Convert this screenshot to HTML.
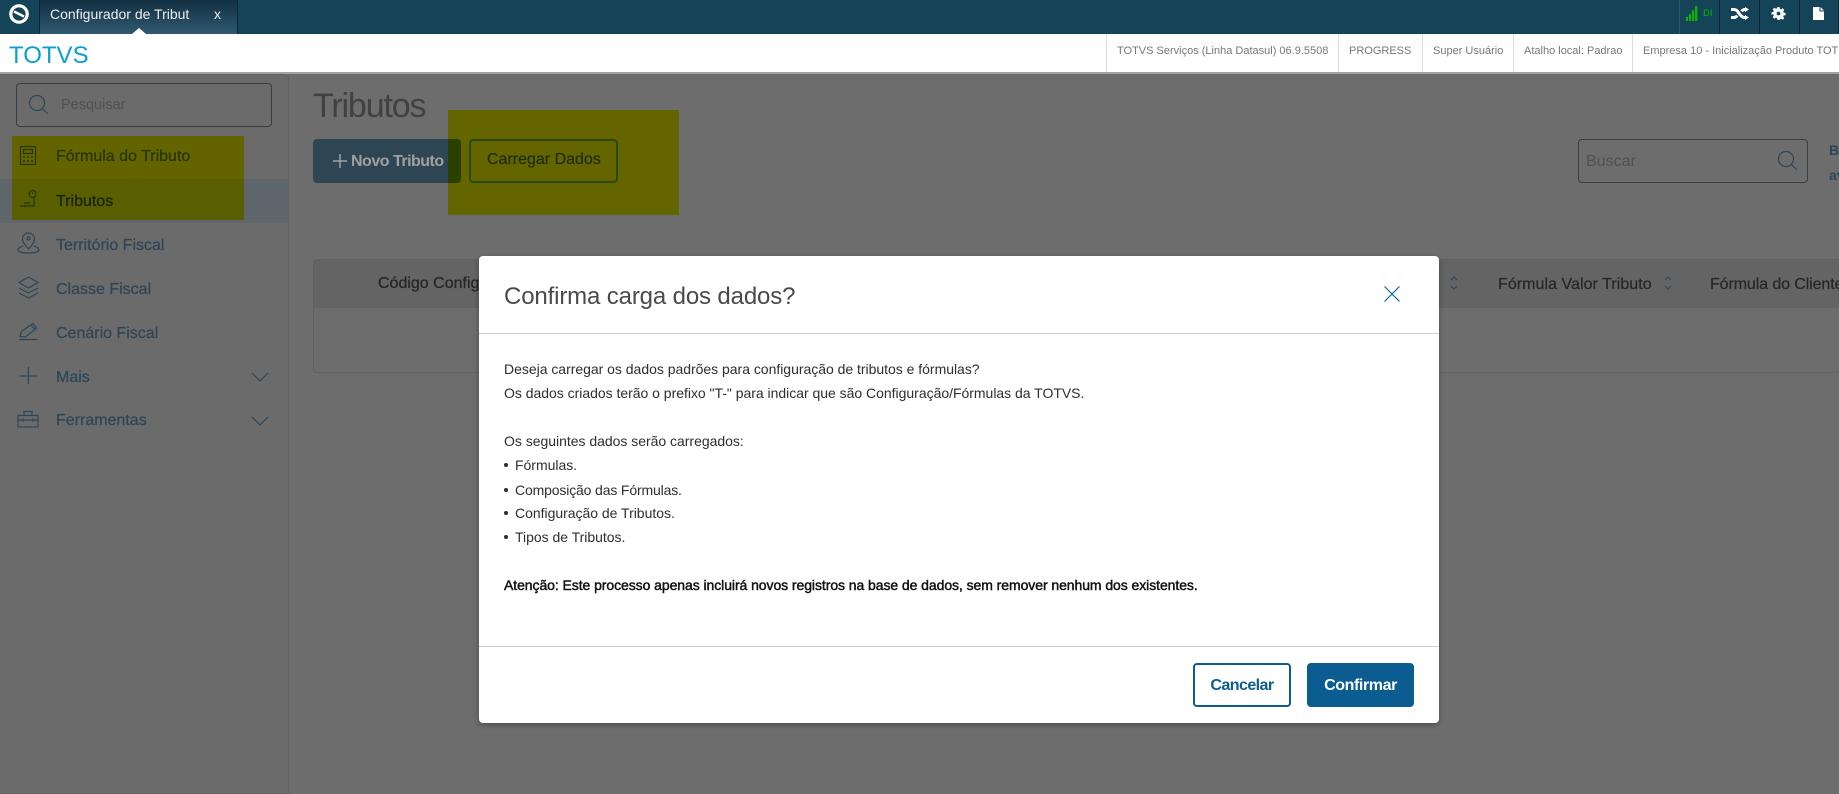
<!DOCTYPE html>
<html lang="pt-BR">
<head>
<meta charset="utf-8">
<title>Configurador de Tributos</title>
<style>
html,body{margin:0;padding:0;width:1839px;height:783px;overflow:hidden;background:#6d6d6d;font-family:"Liberation Sans",sans-serif}
.a{position:absolute}
.t{position:absolute;white-space:nowrap;line-height:1}
svg{position:absolute;overflow:visible}
.sep{position:absolute;width:1px}
.nav{font-size:16px;color:#2d4657;font-weight:400;-webkit-text-stroke:.25px #2d4657}
.mt{font-size:14px;color:#2e2e2e;letter-spacing:-.02px}
.b{display:inline-block;width:4px;height:4px;border-radius:50%;background:#2e2e2e;vertical-align:3px;margin-right:7px}
</style>
</head>
<body>
<!-- top bar -->
<div class="a" style="left:0;top:0;width:1839px;height:34px;background:#154357"></div>
<svg style="left:0;top:0" width="38" height="34" viewBox="0 0 38 34"><circle cx="19" cy="14" r="8.200" fill="none" stroke="#fff" stroke-width="3.200"/><path d="M14 11.500L24 16.500" fill="none" stroke="#fff" stroke-width="2.400"/></svg>
<div class="a" style="left:39px;top:0;width:199px;height:34px;background:linear-gradient(#112f42,#30596f);border-left:1px solid #0d2634;border-right:1px solid #0d2634;box-sizing:border-box"></div>
<div class="t" style="left:50px;top:7px;font-size:14px;color:#eee">Configurador de Tribut</div>
<div class="t" style="left:214px;top:7px;font-size:14px;color:#eee">x</div>
<div class="a" style="left:132px;top:28px;width:0;height:0;border-left:7px solid transparent;border-right:7px solid transparent;border-bottom:6px solid #fff"></div>
<div class="sep" style="left:1679px;top:0;height:34px;background:#2a5a70"></div>
<div class="sep" style="left:1719px;top:0;height:34px;background:#0d2634"></div>
<div class="sep" style="left:1759px;top:0;height:34px;background:#0d2634"></div>
<div class="sep" style="left:1799px;top:0;height:34px;background:#0d2634"></div>
<div class="sep" style="left:1838px;top:0;height:34px;background:#0d2634"></div>
<svg style="left:1686px;top:5px" width="12" height="16" viewBox="0 0 12 16"><path d="M0 12h2v4H0zM3 9h2v7H3zM6 5h2v11H6zM9 1h2.400v15H9z" fill="#0b0"/></svg>
<div class="t" style="left:1703px;top:9px;font-size:9.500px;color:#0b0">DI</div>
<svg style="left:1731px;top:7px" width="18" height="13" viewBox="0 0 18 13"><path d="M0 2.500h3c3 0 4 2.500 5.500 4.500s3 3.500 5 3.500H15M0 10.500h3c1.500 0 2.500-.8 3.300-1.800M10.500 4.300c.8-1 1.800-1.800 3.500-1.800h1" fill="none" stroke="#fff" stroke-width="3"/><path d="M14 0l4 2.500-4 2.500zM14 8l4 2.500-4 2.500z" fill="#fff"/></svg>
<svg style="left:1772px;top:7px" width="13" height="13" viewBox="0 0 24 24"><path fill="#fff" d="M10 0h4l.7 3.400 2.200.9 2.900-1.900 2.800 2.800-1.900 2.900.9 2.200 3.400.7v4l-3.400.7-.9 2.200 1.900 2.900-2.800 2.800-2.900-1.900-2.200.9L14 24h-4l-.7-3.400-2.200-.9-2.900 1.900-2.800-2.800 1.900-2.900-.9-2.200L-1 14v-4l3.400-.7.9-2.200-1.900-2.900 2.800-2.800 2.900 1.900 2.200-.9zM12 8.500a3.500 3.500 0 100 7 3.500 3.500 0 000-7z" fill-rule="evenodd"/></svg>
<svg style="left:1813px;top:7px" width="11" height="13" viewBox="0 0 11 13"><path d="M0 0h6.500v4.500H11V13H0zM7.500 0L11 3.500H7.500z" fill="#fff"/></svg>

<!-- second bar -->
<div class="a" style="left:0;top:34px;width:1839px;height:38px;background:#fff"></div>
<div class="a" style="left:0;top:72px;width:1839px;height:2px;background:#a3a3a3"></div>
<div class="t" style="left:9px;top:44px;font-size:24px;color:#0b9fd0">TOTVS</div>
<div class="sep" style="left:1106px;top:34px;height:38px;background:#ddd"></div>
<div class="sep" style="left:1338px;top:34px;height:38px;background:#ddd"></div>
<div class="sep" style="left:1422px;top:34px;height:38px;background:#ddd"></div>
<div class="sep" style="left:1513px;top:34px;height:38px;background:#ddd"></div>
<div class="sep" style="left:1632px;top:34px;height:38px;background:#ddd"></div>
<div class="t" style="left:1117px;top:46px;font-size:11px;color:#777">TOTVS Serviços (Linha Datasul) 06.9.5508</div>
<div class="t" style="left:1349px;top:46px;font-size:11px;color:#777">PROGRESS</div>
<div class="t" style="left:1433px;top:46px;font-size:11px;color:#777">Super Usuário</div>
<div class="t" style="left:1524px;top:46px;font-size:11px;color:#777">Atalho local: Padrao</div>
<div class="t" style="left:1643px;top:46px;font-size:11px;color:#777">Empresa 10 - Inicialização Produto TOT</div>

<!-- sidebar -->
<div class="a" style="left:-2px;top:74px;width:291px;height:720px;background:#6b6b6b;border:1px solid #626262;border-radius:5px 5px 0 0;box-sizing:border-box"></div>
<div class="a" style="left:0;top:179px;width:288px;height:44px;background:#60676c"></div>
<div class="a" style="left:16px;top:83px;width:256px;height:44px;border:1px solid #3d3d3d;border-radius:4px;box-sizing:border-box"></div>
<svg style="left:28px;top:94px" width="22" height="22" viewBox="0 0 22 22"><circle cx="9" cy="9" r="7.500" fill="none" stroke="#2d4657" stroke-width="1.200"/><path d="M14.500 14.500L20 20" stroke="#2d4657" stroke-width="1.200"/></svg>
<div class="t" style="left:61px;top:98px;font-size:14.500px;color:#505050">Pesquisar</div>

<div class="t nav" style="left:56px;top:149px;color:#2b3a08;-webkit-text-stroke:.25px #2b3a08">Fórmula do Tributo</div>
<div class="t nav" style="left:56px;top:194px;color:#1c2408;-webkit-text-stroke:.25px #1c2408">Tributos</div>
<div class="t nav" style="left:56px;top:238px">Território Fiscal</div>
<div class="t nav" style="left:56px;top:282px">Classe Fiscal</div>
<div class="t nav" style="left:56px;top:326px">Cenário Fiscal</div>
<div class="t nav" style="left:56px;top:370px">Mais</div>
<div class="t nav" style="left:56px;top:413px">Ferramentas</div>

<svg style="left:0;top:130px" width="50" height="300" viewBox="0 0 50 300" fill="none" stroke="#2d4657" stroke-width="1.200">
<!-- calculator -->
<g stroke="#2b3a08"><rect x="20.500" y="16.500" width="15" height="18"/><rect x="23.500" y="19.500" width="9" height="4"/>
<path d="M23 27h2M27 27h2M31 27h2M23 31h2M27 31h2M31 31h2" stroke-width="1.500"/>
<!-- tributos -->
<circle cx="32.500" cy="64" r="3.500"/><path d="M34 67.500V76H20M24 73h6M32.500 62v2"/></g>
<!-- territorio -->
<path d="M28.500 119c-3.500-4-6-7-6-10a6 6 0 0112 0c0 3-2.500 6-6 10z"/><circle cx="28.500" cy="108.500" r="1.500"/><path d="M23 116c-3 1-5 2.300-5 4 0 2 4.500 3 10.500 3s10.500-1 10.500-3c0-1.700-2-3-5-4"/>
<!-- classe -->
<path d="M28.500 147l9.500 5.500-9.500 5.500-9.500-5.500zM19 158l9.500 5 9.500-5M19 163l9.500 5 9.500-5"/>
<!-- cenario -->
<path d="M20 206.500l1.500-5 11.500-8 3.500 4.500-11 9zM31 195l4 4.500M19.500 209.500h18"/>
<!-- mais -->
<path d="M28.500 237v17M19.500 246h17.500"/>
<!-- ferramentas -->
<rect x="18" y="285.500" width="20" height="11.500"/><path d="M24 285.500v-4h8v4M18 290h20M23 288.500v3M33 288.500v3"/>
</svg>
<svg style="left:250px;top:371px" width="20" height="60" viewBox="0 0 20 60" fill="none" stroke="#2d4657" stroke-width="1.200"><path d="M2 2l8 8 8-8M2 46l8 8 8-8"/></svg>

<!-- content -->
<div class="t" style="left:313px;top:89px;font-size:34px;color:#414141;letter-spacing:-1.150px;font-weight:400">Tributos</div>
<div class="a" style="left:313px;top:139px;width:148px;height:44px;background:#2e4554;border-radius:4px"></div>
<svg style="left:332px;top:153px" width="16" height="16" viewBox="0 0 16 16"><path d="M8 1v14M1 8h14" stroke="#a2a2a2" stroke-width="1.500"/></svg>
<div class="t" style="left:351px;top:154px;font-size:16px;font-weight:700;color:#a0a0a0;letter-spacing:-.5px">Novo Tributo</div>
<div class="a" style="left:469px;top:139px;width:149px;height:44px;border:2px solid #2a4a10;border-radius:4px;box-sizing:border-box;z-index:3"></div>
<div class="t" style="left:487px;top:152px;font-size:16px;color:#202e08;-webkit-text-stroke:.25px #202e08;z-index:3">Carregar Dados</div>

<div class="a" style="left:1578px;top:139px;width:230px;height:44px;border:1px solid #3d3d3d;border-radius:4px;box-sizing:border-box"></div>
<div class="t" style="left:1586px;top:154px;font-size:16px;color:#505050">Buscar</div>
<svg style="left:1777px;top:150px" width="22" height="22" viewBox="0 0 22 22"><circle cx="9" cy="9" r="7.500" fill="none" stroke="#2d4657" stroke-width="1.200"/><path d="M14.500 14.500L20 20" stroke="#2d4657" stroke-width="1.200"/></svg>
<div class="t" style="left:1829px;top:143px;font-size:14px;font-weight:700;color:#2d4657">Bu</div>
<div class="t" style="left:1829px;top:168px;font-size:14px;font-weight:700;color:#2d4657">av</div>

<!-- table -->
<div class="a" style="left:313px;top:259px;width:1540px;height:114px;border:1px solid #616161;border-radius:4px;box-sizing:border-box"></div>
<div class="a" style="left:314px;top:260px;width:1530px;height:48px;background:#646464;border-radius:3px 0 0 0"></div>
<div class="t" style="left:378px;top:276px;font-size:16px;color:#262626;-webkit-text-stroke:.25px #262626">Código Configuração</div>
<div class="t" style="left:1498px;top:277px;font-size:16px;color:#262626;-webkit-text-stroke:.2px #262626;letter-spacing:.05px">Fórmula Valor Tributo</div>
<div class="t" style="left:1710px;top:277px;font-size:16px;color:#262626;-webkit-text-stroke:.2px #262626;letter-spacing:-.1px">Fórmula do Cliente</div>
<svg style="left:1450px;top:276px" width="8" height="14" viewBox="0 0 8 14" fill="none" stroke="#2d4657"><path d="M1 4l3-3 3 3M1 10l3 3 3-3"/></svg>
<svg style="left:1664px;top:276px" width="8" height="14" viewBox="0 0 8 14" fill="none" stroke="#2d4657"><path d="M1 4l3-3 3 3M1 10l3 3 3-3"/></svg>

<!-- yellow highlights -->
<div class="a" style="left:12px;top:136px;width:232px;height:84px;background:#ecec00;mix-blend-mode:multiply;z-index:2"></div>
<div class="a" style="left:448px;top:110px;width:231px;height:105px;background:#ecec00;mix-blend-mode:multiply;z-index:2"></div>

<!-- modal -->
<div class="a" style="left:479px;top:256px;width:960px;height:467px;background:#fff;border-radius:4px;box-shadow:0 2px 6px rgba(0,0,0,.3);z-index:5">
  <div class="a" style="left:0;top:77px;width:960px;height:1px;background:#cfcfcf"></div>
  <div class="a" style="left:0;top:390px;width:960px;height:1px;background:#cfcfcf"></div>
  <div class="t" style="left:25px;top:29px;font-size:24px;color:#4a4a4a;letter-spacing:-.14px">Confirma carga dos dados?</div>
  <svg style="left:905px;top:30px" width="16" height="16" viewBox="0 0 16 16"><path d="M.5.500l15 15M15.500.500l-15 15" stroke="#0c6c9c" stroke-width="1.200"/></svg>
  <div class="t mt" style="left:25px;top:106px">Deseja carregar os dados padrões para configuração de tributos e fórmulas?</div>
  <div class="t mt" style="left:25px;top:130px">Os dados criados terão o prefixo "T-" para indicar que são Configuração/Fórmulas da TOTVS.</div>
  <div class="t mt" style="left:25px;top:178px">Os seguintes dados serão carregados:</div>
  <div class="t mt" style="left:25px;top:202px"><span class="b"></span>Fórmulas.</div>
  <div class="t mt" style="left:25px;top:227px;letter-spacing:-.15px"><span class="b"></span>Composição das Fórmulas.</div>
  <div class="t mt" style="left:25px;top:250px"><span class="b"></span>Configuração de Tributos.</div>
  <div class="t mt" style="left:25px;top:274px"><span class="b"></span>Tipos de Tributos.</div>
  <div class="t mt" style="left:25px;top:322px;color:#111;-webkit-text-stroke:.45px #111;letter-spacing:-.07px">Atenção: Este processo apenas incluirá novos registros na base de dados, sem remover nenhum dos existentes.</div>
  <div class="a" style="left:714px;top:407px;width:98px;height:44px;border:2px solid #0b5c90;border-radius:4px;box-sizing:border-box;background:#fff"></div>
  <div class="t" style="left:714px;top:422px;width:98px;text-align:center;font-size:16px;font-weight:700;color:#0b5c90;letter-spacing:-.55px">Cancelar</div>
  <div class="a" style="left:828px;top:407px;width:107px;height:44px;border-radius:4px;background:#0b5c90"></div>
  <div class="t" style="left:828px;top:422px;width:107px;text-align:center;font-size:16px;font-weight:700;color:#fff;letter-spacing:-.4px">Confirmar</div>
</div>
</body>
</html>
